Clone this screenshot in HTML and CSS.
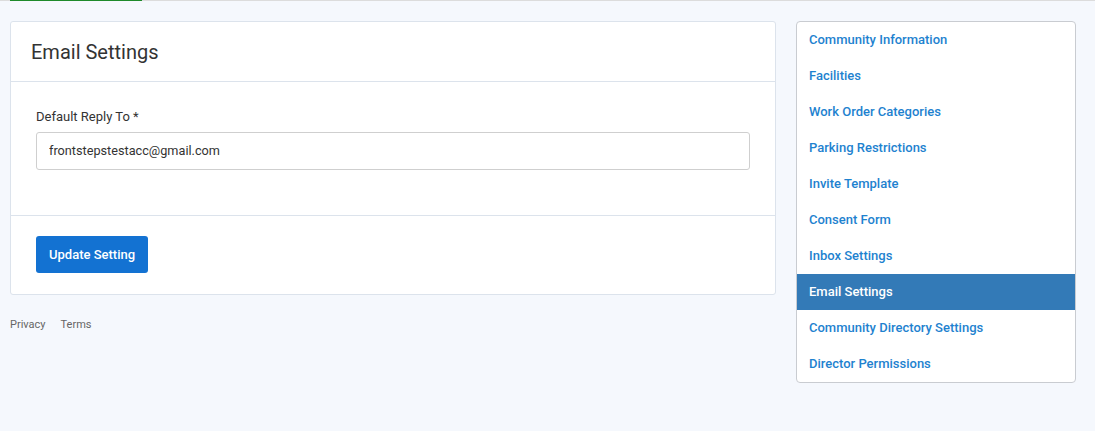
FILE: index.html
```html
<!DOCTYPE html>
<html lang="en">
<head>
<meta charset="utf-8">
<title>Email Settings</title>
<link rel="stylesheet" href="styles.css">
</head>
<body>
<div class="topbar"><div class="progress"></div></div>
<div class="page">
  <main class="main">
    <section class="card">
      <header class="card-header"><h1 class="card-title">Email Settings</h1></header>
      <div class="card-body">
        <div class="form-group">
          <label class="label" for="reply">Default Reply To *</label>
          <input class="input" id="reply" type="text" value="frontstepstestacc@gmail.com">
        </div>
      </div>
      <div class="card-footer">
        <button class="btn" type="button">Update Setting</button>
      </div>
    </section>
    <footer class="footer">
      <a class="footer-link" href="#">Privacy</a>
      <a class="footer-link" href="#">Terms</a>
    </footer>
  </main>
  <nav class="sidebar">
    <a class="nav-item" href="#">Community Information</a>
    <a class="nav-item" href="#">Facilities</a>
    <a class="nav-item" href="#">Work Order Categories</a>
    <a class="nav-item" href="#">Parking Restrictions</a>
    <a class="nav-item" href="#">Invite Template</a>
    <a class="nav-item" href="#">Consent Form</a>
    <a class="nav-item" href="#">Inbox Settings</a>
    <a class="nav-item active" href="#">Email Settings</a>
    <a class="nav-item" href="#">Community Directory Settings</a>
    <a class="nav-item" href="#">Director Permissions</a>
  </nav>
</div>
</body>
</html>
```

FILE: styles.css
```css
* { box-sizing: border-box; }
html, body {
  margin: 0;
  padding: 0;
  background: #f5f8fd;
  font-family: Roboto, "Liberation Sans", sans-serif;
  color: #333;
}
.topbar {
  height: 1px;
  background: #dcdcdc;
}
.progress {
  height: 1px;
  margin-left: 10px;
  background: #1e8a2a;
  width: 132px;
}
.page {
  display: flex;
  align-items: flex-start;
  gap: 20px;
  padding: 20px 19px 0 10px;
}
.main {
  flex: 0 0 766px;
}
.card {
  background: #fff;
  border: 1px solid #dce3ec;
  border-radius: 3px;
}
.card-header {
  height: 60px;
  border-bottom: 1px solid #dce3ec;
  padding: 0 20px;
  display: flex;
  align-items: center;
}
.card-title {
  margin: 0;
  font-size: 20px;
  font-weight: 400;
  color: #333;
}
.card-body {
  padding: 26px 25px 45px;
  border-bottom: 1px solid #dce3ec;
}
.label {
  display: block;
  font-size: 13px;
  line-height: 18px;
  color: #333;
  margin-bottom: 6px;
}
.input {
  display: block;
  width: 100%;
  height: 38px;
  border: 1px solid #cfcfcf;
  border-radius: 3px;
  padding: 0 12px 2px;
  font-family: inherit;
  font-size: 12.7px;
  color: #333;
  background: #fff;
}
.card-footer {
  padding: 20px 25px 21px;
}
.btn {
  display: block;
  height: 37px;
  padding: 0 13px;
  border: 0;
  border-radius: 3px;
  background: #1372d2;
  color: #fff;
  font-family: inherit;
  font-size: 13px;
  font-weight: 500;
}
.footer {
  display: flex;
  gap: 15px;
  padding-top: 23px;
}
.footer-link {
  font-size: 11px;
  color: #666;
  text-decoration: none;
}
.sidebar {
  flex: 0 0 280px;
  background: #fff;
  border: 1px solid #c9ccd1;
  border-radius: 4px;
  display: flex;
  flex-direction: column;
}
.nav-item {
  height: 36px;
  display: flex;
  align-items: center;
  padding: 0 12px 2px;
  font-size: 13px;
  font-weight: 500;
  color: #1e82cf;
  text-decoration: none;
}
.nav-item.active {
  background: #337ab7;
  color: #fff;
}
```
